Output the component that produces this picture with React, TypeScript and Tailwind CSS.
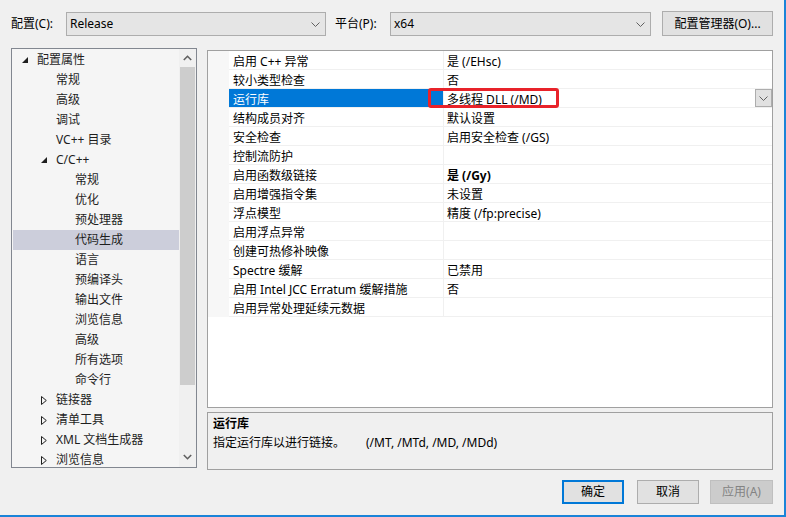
import React from "react";

const FONT = '"Segoe UI", "Noto Sans", "Noto Sans CJK SC", sans-serif';

function Chevron({ className = "" }: { className?: string }) {
  return (
    <svg width="9" height="5" viewBox="0 0 9 5" className={className}>
      <path d="M0.5 0.5 L4.5 4.5 L8.5 0.5" fill="none" stroke="#606060" strokeWidth="1" />
    </svg>
  );
}

function ChevronUp() {
  return (
    <svg width="9" height="6" viewBox="0 0 9 6">
      <path d="M0.8 5 L4.5 1.3 L8.2 5" fill="none" stroke="#606060" strokeWidth="1.6" />
    </svg>
  );
}

function ChevronDown() {
  return (
    <svg width="9" height="6" viewBox="0 0 9 6">
      <path d="M0.8 1 L4.5 4.7 L8.2 1" fill="none" stroke="#606060" strokeWidth="1.6" />
    </svg>
  );
}

function TriOpen() {
  return (
    <svg width="6" height="6" viewBox="0 0 6 6">
      <polygon points="6,0 6,6 0,6" fill="#1e1e1e" />
    </svg>
  );
}

function TriClosed() {
  return (
    <svg width="6" height="9" viewBox="0 0 6 9">
      <polygon points="0.5,0.5 5.3,4.5 0.5,8.5" fill="none" stroke="#1e1e1e" strokeWidth="1" />
    </svg>
  );
}

type TreeItem = { l: number; t: string; tri?: "open" | "closed"; sel?: boolean };

const tree: TreeItem[] = [
  { l: 0, t: "配置属性", tri: "open" },
  { l: 1, t: "常规" },
  { l: 1, t: "高级" },
  { l: 1, t: "调试" },
  { l: 1, t: "VC++ 目录" },
  { l: 1, t: "C/C++", tri: "open" },
  { l: 2, t: "常规" },
  { l: 2, t: "优化" },
  { l: 2, t: "预处理器" },
  { l: 2, t: "代码生成", sel: true },
  { l: 2, t: "语言" },
  { l: 2, t: "预编译头" },
  { l: 2, t: "输出文件" },
  { l: 2, t: "浏览信息" },
  { l: 2, t: "高级" },
  { l: 2, t: "所有选项" },
  { l: 2, t: "命令行" },
  { l: 1, t: "链接器", tri: "closed" },
  { l: 1, t: "清单工具", tri: "closed" },
  { l: 1, t: "XML 文档生成器", tri: "closed" },
  { l: 1, t: "浏览信息", tri: "closed" },
];

type Prop = { n: string; v: string; sel?: boolean; bold?: boolean };

const props: Prop[] = [
  { n: "启用 C++ 异常", v: "是 (/EHsc)" },
  { n: "较小类型检查", v: "否" },
  { n: "运行库", v: "多线程 DLL (/MD)", sel: true },
  { n: "结构成员对齐", v: "默认设置" },
  { n: "安全检查", v: "启用安全检查 (/GS)" },
  { n: "控制流防护", v: "" },
  { n: "启用函数级链接", v: "是 (/Gy)", bold: true },
  { n: "启用增强指令集", v: "未设置" },
  { n: "浮点模型", v: "精度 (/fp:precise)" },
  { n: "启用浮点异常", v: "" },
  { n: "创建可热修补映像", v: "" },
  { n: "Spectre 缓解", v: "已禁用" },
  { n: "启用 Intel JCC Erratum 缓解措施", v: "否" },
  { n: "启用异常处理延续元数据", v: "" },
];

export default function App() {
  return (
    <div
      className="w-[786px] h-[517px] bg-[#f0f0f0] border-r-2 border-b-2 border-[#1a84d8] overflow-hidden text-[12px] text-black pt-[11px] pl-[11px]"
      style={{ fontFamily: FONT }}
    >
      {/* Top row */}
      <div className="flex items-center h-[25px]">
        <div className="w-[55px]">配置(C):</div>
        <div className="w-[260px] h-[24px] mt-[1px] bg-[#e5e5e5] border border-[#adadad] flex items-center pl-[3px] pr-[5px]">
          <span className="flex-1">Release</span>
          <Chevron />
        </div>
        <div className="w-[55px] ml-[9px]">平台(P):</div>
        <div className="w-[261px] h-[24px] mt-[1px] bg-[#e5e5e5] border border-[#adadad] flex items-center pl-[3px] pr-[5px]">
          <span className="flex-1">x64</span>
          <Chevron />
        </div>
        <div className="ml-[11px] w-[111px] h-[25px] bg-[#e1e1e1] border border-[#adadad] flex items-center justify-center">
          配置管理器(O)...
        </div>
      </div>

      {/* Main */}
      <div className="flex mt-[12px] gap-[10px]">
        {/* Tree */}
        <div className="w-[186px] h-[420px] border border-[#828790] bg-[#f5f5f5] flex overflow-hidden">
          <div className="w-[167px] pt-[1px] pl-[1px] overflow-hidden">
            {tree.map((it, i) => {
              const spacer = it.l === 0 ? 10 : it.l === 1 ? 29 : 48;
              return (
                <div
                  key={i}
                  className={
                    "h-[20px] flex items-center whitespace-nowrap " +
                    (it.sel ? "bg-[#cccedb]" : "")
                  }
                >
                  <span className="shrink-0" style={{ width: spacer - 1 }} />
                  <span className="w-[15px] shrink-0 flex items-center">
                    {it.tri === "open" && <TriOpen />}
                    {it.tri === "closed" && <TriClosed />}
                  </span>
                  <span className="text-[#1e1e1e]">{it.t}</span>
                </div>
              );
            })}
          </div>
          <div className="w-[17px] h-full bg-[#f0f0f0] flex flex-col items-center">
            <div className="h-[18px] flex items-center justify-center">
              <ChevronUp />
            </div>
            <div className="w-[15px] h-[318px] bg-[#cdcdcd]" />
            <div className="flex-1" />
            <div className="h-[18px] mb-[1px] flex items-center justify-center">
              <ChevronDown />
            </div>
          </div>
        </div>

        {/* Right column */}
        <div className="w-[566px] mt-[2px] flex flex-col">
          {/* Property grid */}
          <div className="relative h-[358px] border border-[#a0a0a0] bg-white">
            {props.map((p, i) => (
              <div key={i} className="h-[19px] flex">
                <div className="w-[21px] bg-[#f7f7f7]" />
                <div
                  className={
                    "w-[215px] h-full border-b border-r border-[#f0f0f0] pl-[4px] pt-[3px] leading-[15px] whitespace-nowrap " +
                    (p.sel ? "bg-[#0078d7] text-white" : "")
                  }
                >
                  {p.n}
                </div>
                <div className="flex-1 h-full border-b border-[#f0f0f0] pl-[3px] flex whitespace-nowrap">
                  <span className={"flex-1 pt-[3px] leading-[15px] " + (p.bold ? "font-bold" : "")}>{p.v}</span>
                  {p.sel && (
                    <div className="w-[17px] h-[18px] bg-[#e1e1e1] border border-[#adadad] flex items-center justify-center">
                      <Chevron />
                    </div>
                  )}
                </div>
              </div>
            ))}
            <div className="absolute left-[220px] top-[37px] w-[131px] h-[20px] border-[3px] border-[#e8232a] rounded-[3px]" />
          </div>

          {/* Description */}
          <div className="mt-[4px] h-[58px] border border-[#a0a0a0] bg-[#f0f0f0] pl-[5px] pt-[1px] leading-[19px]">
            <div className="font-bold">运行库</div>
            <div className="whitespace-nowrap">
              指定运行库以进行链接。<span className="ml-[21px]">(/MT, /MTd, /MD, /MDd)</span>
            </div>
          </div>

          {/* Buttons */}
          <div className="flex justify-end mt-[10px] gap-[13px]">
            <div className="w-[62px] h-[24px] bg-[#e1e1e1] border-2 border-[#0078d7] flex items-center justify-center">
              确定
            </div>
            <div className="w-[62px] h-[24px] bg-[#e1e1e1] border border-[#adadad] flex items-center justify-center mr-[-2px]">
              取消
            </div>
            <div className="w-[63px] h-[24px] bg-[#cccccc] border border-[#bfbfbf] text-[#838383] flex items-center justify-center">
              应用(A)
            </div>
          </div>
        </div>
      </div>
    </div>
  );
}
